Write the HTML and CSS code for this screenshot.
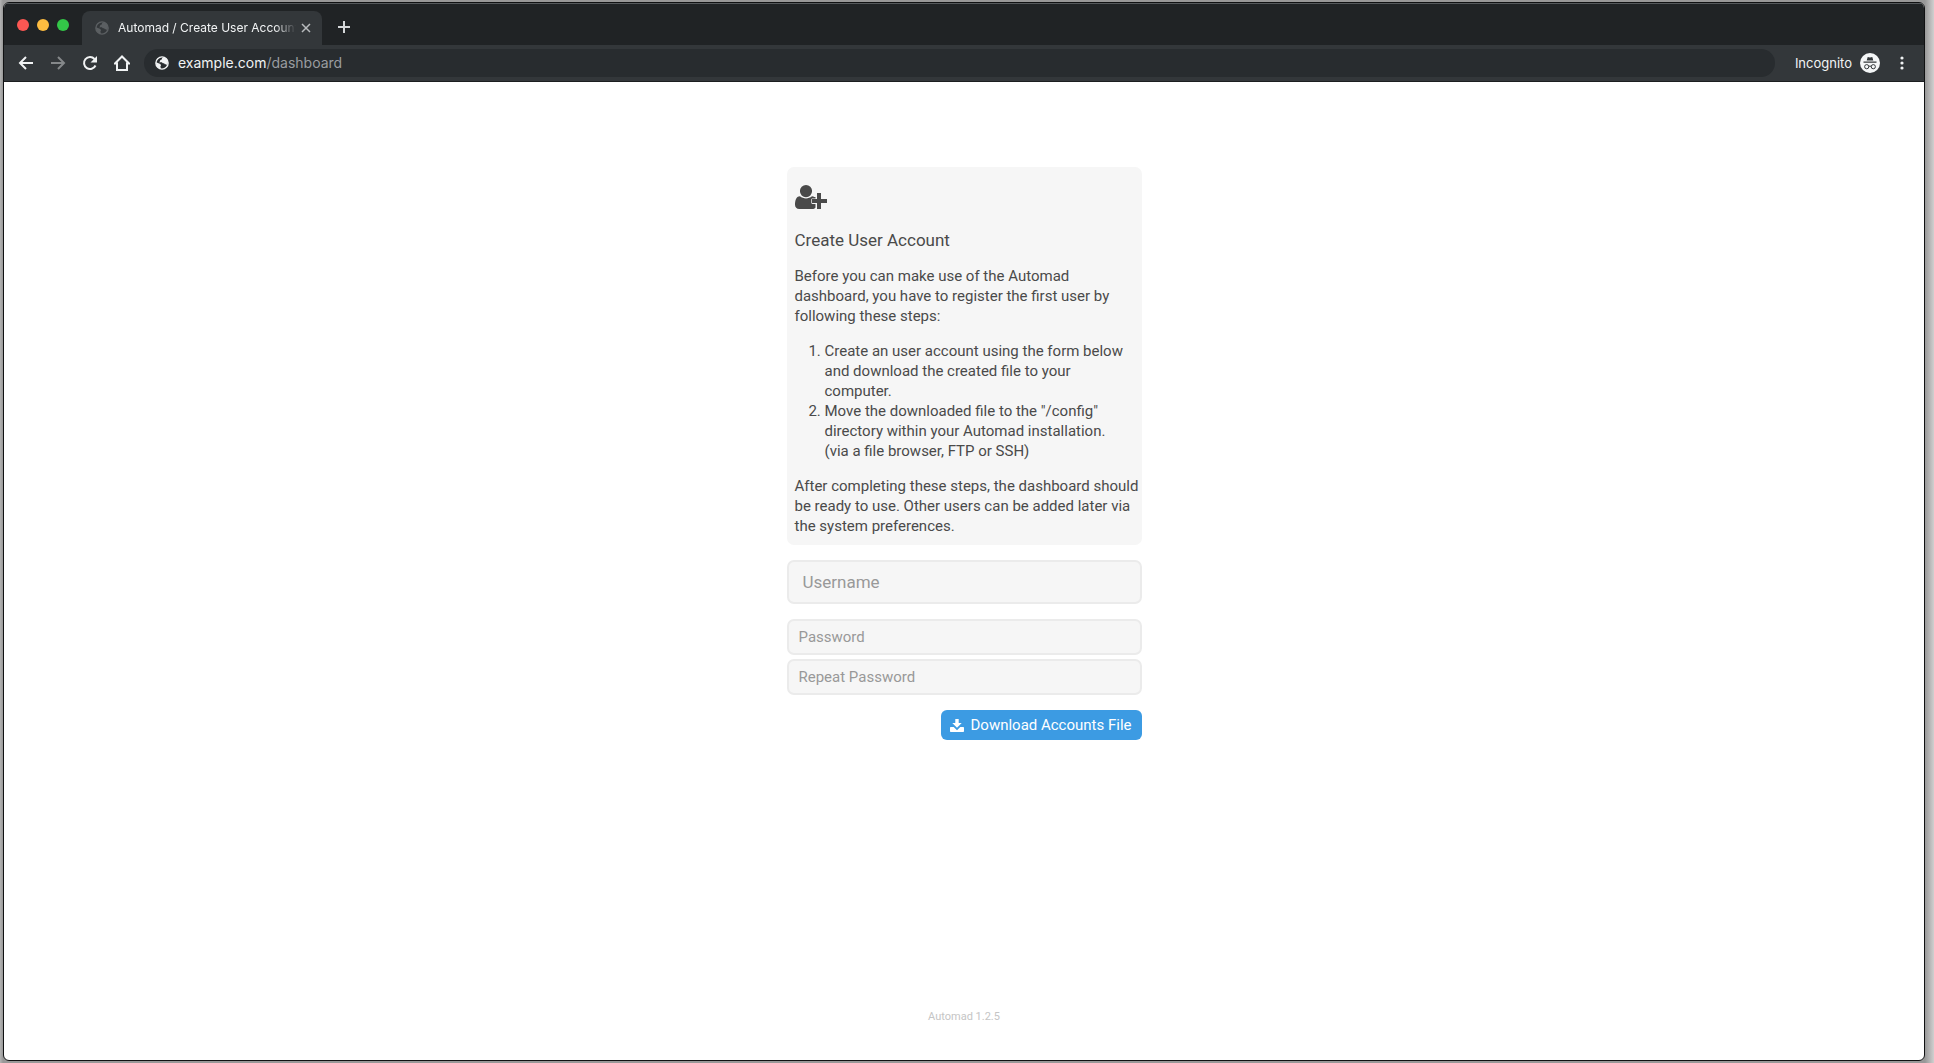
FILE: index.html
```html
<!DOCTYPE html>
<html lang="en">
<head>
<meta charset="utf-8">
<title>Automad / Create User Account</title>
<link rel="stylesheet" href="styles.css">
</head>
<body>
<svg class="sprite" aria-hidden="true">
  <symbol id="globe" viewBox="0 0 16 16">
    <circle cx="8" cy="8" r="7" fill="none" stroke="currentColor" stroke-width="1.600"/>
    <path fill="currentColor" d="M9.500 1.500L8 2.500 7.700 4 6 4.600 5.800 6 4.600 7H7.800l1.200 1.200h1.400l.8 1.300 1.600-.2.6 1.200L14.800 8C15 4.500 12.500 1.800 9.500 1.500zM1.200 7l4.300 1.800 1.500 1.600-.8 1.600.6 2.600C3.500 14 1 11 1.200 7z"/>
  </symbol>
</svg>
<div class="window">
  <header class="tabstrip">
    <div class="lights"><i class="light red"></i><i class="light yellow"></i><i class="light green"></i></div>
    <div class="tab">
      <svg class="tab-icon"><use href="#globe"/></svg>
      <span class="tab-title">Automad / Create User Account</span>
      <button class="plain tab-close" aria-label="Close tab"><svg width="10" height="10" viewBox="0 0 10 10"><path d="M1 1l8 8M9 1l-8 8"/></svg></button>
    </div>
    <button class="plain new-tab" aria-label="New tab"><svg width="12" height="12" viewBox="0 0 12 12"><path d="M6 0v12M0 6h12"/></svg></button>
  </header>
  <nav class="toolbar">
    <button class="plain" aria-label="Back"><svg width="16" height="16" viewBox="0 0 16 16"><path d="M15 8H2M8 2L2 8l6 6"/></svg></button>
    <button class="plain dim" aria-label="Forward"><svg width="16" height="16" viewBox="0 0 16 16"><path d="M1 8h13M8 2l6 6-6 6"/></svg></button>
    <button class="plain" aria-label="Reload"><svg width="16" height="16" viewBox="0 0 16 16"><path d="M13.500 10.500A6 6 0 1 1 12.500 4"/><path class="solid" d="M15 1v6.500H8.500z"/></svg></button>
    <button class="plain" aria-label="Home"><svg width="16" height="16" viewBox="0 0 16 16"><path d="M1 8.500L8 1.500l7 7h-2V15H3V8.500z"/></svg></button>
    <div class="address"><svg class="site-icon"><use href="#globe"/></svg><span>example.com<span class="path">/dashboard</span></span></div>
    <span class="incognito">Incognito</span>
    <svg class="avatar" viewBox="0 0 20 20"><circle cx="10" cy="10" r="10" fill="#f4f6f7"/><path fill="#33373a" d="M6.700 7.500L7.700 4l2.300.5 2.300-.5 1 3.500zM3.500 8.500h13v1.200h-13z"/><g fill="none" stroke="#33373a" stroke-width="1"><circle cx="6.700" cy="13.700" r="2.100"/><circle cx="13.300" cy="13.700" r="2.100"/><path d="M8.800 13.400q1.200-.8 2.400 0"/></g></svg>
    <button class="plain menu" aria-label="Menu"><svg width="4" height="14" viewBox="0 0 4 14"><g class="solid"><circle cx="2" cy="2" r="1.600"/><circle cx="2" cy="7" r="1.600"/><circle cx="2" cy="12" r="1.600"/></g></svg></button>
  </nav>
  <main class="page">
    <form class="signup">
      <section class="panel">
        <svg class="user-icon" viewBox="0 0 32 24"><path fill="currentColor" d="M11 0a6 6 0 1 1 0 12.200A6 6 0 0 1 11 0zM5 11.200c1.700 1.400 3.700 2.200 6 2.200s4.300-.8 6-2.200c.9 0 1.700.2 2.300.7H20.500V13.500H17.500c-.7 0-1.200.5-1.200 1.100v3.200c0 .7.500 1.200 1.200 1.200H20.500V22.500c-.8 1-1.900 1.500-3.300 1.500H4.300C1.700 24 0 22.500 0 19.800c0-3.600.8-8.600 5-8.600zM22 8h4v6h6v4h-6v6h-4v-6H17v-4h5z"/></svg>
        <h1>Create User Account</h1>
        <p>Before you can make use of the Automad dashboard, you have to register the first user by following these steps:</p>
        <ol>
          <li>Create an user account using the form below and download the created file to your computer.</li>
          <li>Move the downloaded file to the "/config" directory within your Automad installation.<br>(via a file browser, FTP or SSH)</li>
        </ol>
        <p>After completing these steps, the dashboard should be ready to use. Other users can be added later via the system preferences.</p>
      </section>
      <input class="field large" type="text" placeholder="Username" aria-label="Username">
      <div class="passwords">
        <input class="field" type="password" placeholder="Password" aria-label="Password">
        <input class="field" type="password" placeholder="Repeat Password" aria-label="Repeat Password">
      </div>
      <button class="submit" type="submit"><svg width="14" height="13" viewBox="0 0 14 13"><path fill="currentColor" d="M5.300 0h3.400v4h3L7 8.700 2.300 4h3zM1 8h2.700L7 11.300 10.300 8H13c.6 0 1 .4 1 1v3c0 .6-.4 1-1 1H1c-.6 0-1-.4-1-1V9c0-.6.4-1 1-1z"/></svg>Download Accounts File</button>
    </form>
    <footer>Automad 1.2.5</footer>
  </main>
</div>
</body>
</html>
```
FILE: styles.css
```css
* { box-sizing: border-box; }

body {
  margin: 0;
  min-height: 100vh;
  display: flex;
  padding: 2px 9px 2px 3px;
  background: linear-gradient(90deg, #b4b4b4, #989898 3px, #989898 calc(100% - 9px), #d0d0d0);
  font-family: Inter, "Liberation Sans", sans-serif;
  font-size: 14px;
  line-height: 20px;
  color: #4a4a4a;
}

.sprite { position: absolute; width: 0; height: 0; }

.window {
  flex: 1;
  display: flex;
  flex-direction: column;
  overflow: hidden;
  border: 1px solid #101112;
  border-radius: 6px;
  background: #fff;
}

.plain {
  display: flex;
  padding: 0;
  border: 0;
  background: none;
  color: #f1f3f4;
}
.plain svg { fill: none; stroke: currentColor; stroke-width: 2; }
.plain .solid { fill: currentColor; stroke: none; }

.tabstrip {
  display: flex;
  align-items: center;
  height: 42px;
  padding-left: 13px;
  border-top: 1px solid #55595c;
  background: #202325;
}
.lights { display: flex; gap: 8px; margin-right: 13px; }
.light { width: 12px; height: 12px; border-radius: 50%; }
.red { background: #fc5753; }
.yellow { background: #fdbc40; }
.green { background: #33c748; }

.tab {
  align-self: flex-end;
  display: flex;
  align-items: center;
  width: 240px;
  height: 34px;
  padding: 0 11px 0 13px;
  border-radius: 8px 8px 0 0;
  background: #33373a;
}
.tab-icon { width: 14px; height: 14px; color: #5b5f62; }
.tab-title {
  flex: 1;
  margin: 0 5px 0 9px;
  overflow: hidden;
  white-space: nowrap;
  font-size: 12px;
  color: #f1f3f4;
  mask-image: linear-gradient(90deg, #000 88%, transparent);
}
.tab-close { color: #b8bbbd; }
.tab-close svg { stroke-width: 1.500; }
.new-tab { margin: 4px 0 0 16px; color: #d4d7d9; }

.toolbar {
  display: flex;
  align-items: center;
  gap: 16px;
  height: 37px;
  padding: 0 20px 0 14px;
  border-bottom: 1px solid #1c1e20;
  background: #33373a;
}
.dim { color: #85888a; }
.address {
  flex: 1;
  display: flex;
  align-items: center;
  gap: 9px;
  height: 28px;
  margin: 0 4px 0 -2px;
  padding-left: 11px;
  border-radius: 14px;
  background: #282c2f;
  color: #f1f3f4;
}
.address .path { color: #9a9da0; }
.site-icon { width: 14px; height: 14px; }
.incognito { margin-right: -8px; font-size: 13px; color: #f1f3f4; }
.avatar { width: 20px; height: 20px; }
.menu { margin-left: 4px; }

.page {
  flex: 1;
  display: flex;
  flex-direction: column;
  align-items: center;
  padding: 85px 16px 33px;
  font-family: Roboto, "Liberation Sans", sans-serif;
  font-size: 15px;
}
.signup { width: 100%; max-width: 355px; }
.panel {
  padding: 18px 2px 9px 8px;
  border-radius: 7px;
  background: #f6f6f6;
}
.user-icon { display: block; width: 32px; height: 24px; }
h1 {
  margin: 20px 0 15px;
  font-size: 17px;
  font-weight: 400;
  line-height: 22px;
}
p { margin: 0; }
ol { margin: 15px 0; padding-left: 30px; }

.field {
  display: block;
  width: 100%;
  height: 36px;
  padding: 0 10px;
  border: 2px solid #ebebeb;
  border-radius: 7px;
  background: #f6f6f6;
  font: inherit;
  color: #4a4a4a;
}
.field::placeholder { color: #999; opacity: 1; }
.field.large {
  height: 44px;
  margin: 15px 0;
  padding: 0 14px;
  font-size: 17px;
}
.passwords { display: grid; gap: 4px; }
.submit {
  display: flex;
  align-items: center;
  gap: 6px;
  height: 30px;
  margin: 15px 0 0 auto;
  padding: 0 10px 0 9px;
  border: 0;
  border-radius: 6px;
  background: #3c9be3;
  font: inherit;
  color: #fff;
}
footer { margin-top: auto; font-size: 11px; color: #c5c5c5; }
```
